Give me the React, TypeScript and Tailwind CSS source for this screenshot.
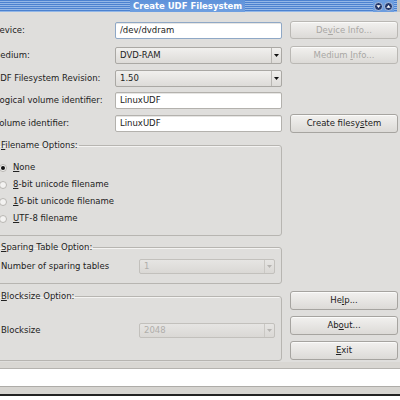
import React from 'react';

const U = ({ children }: { children: React.ReactNode }) => (
  <span className="underline underline-offset-[1px]">{children}</span>
);

const Field = ({ value, focused }: { value: string; focused?: boolean }) => (
  <div
    className={`w-[167px] h-[17px] bg-white border rounded-[2px] flex items-center pl-[4px] shadow-[inset_0_1px_0_#e6e5e3] ${
      focused ? 'border-[#8fa8c6]' : 'border-[#b3b1ad]'
    }`}
  >
    {value}
  </div>
);

const Combo = ({ value, disabled, w }: { value: string; disabled?: boolean; w: string }) => (
  <div
    className={`${w} flex items-stretch border rounded-[2px] bg-gradient-to-b ${
      disabled
        ? 'border-[#c2c0bc] from-[#e6e5e3] to-[#dad8d5] text-[#b0aeab]'
        : 'border-[#aaa8a4] from-[#f1f0ee] to-[#dddbd8] text-[#222]'
    }`}
  >
    <div className="flex-1 flex items-center pl-[4px]">{value}</div>
    <div
      className={`w-[10px] flex items-center justify-center border-l ${
        disabled ? 'border-[#cac8c4]' : 'border-[#b9b7b3]'
      }`}
    >
      <svg width="5" height="3" viewBox="0 0 5 3">
        <path d="M0 0h5L2.5 3z" fill={disabled ? '#b5b3b0' : '#111'} />
      </svg>
    </div>
  </div>
);

const Button = ({ children, disabled, h = 'h-[18px]' }: { children: React.ReactNode; disabled?: boolean; h?: string }) => (
  <div
    className={`w-[108px] ${h} flex items-center justify-center border rounded-[3px] bg-gradient-to-b from-[#f2f1ef] to-[#dcdad7] shadow-[inset_0_1px_0_#fbfbfa] ${
      disabled ? 'border-[#bab8b4] text-[#a9a7a4]' : 'border-[#a6a4a0] text-[#222]'
    }`}
  >
    <span>{children}</span>
  </div>
);

const Radio = ({ checked, children }: { checked?: boolean; children: React.ReactNode }) => (
  <div className="h-[17px] flex items-center">
    <div className="ml-[7px] w-[8px] h-[8px] rounded-full border border-[#b8b6b2] bg-[#f3f2f1] flex items-center justify-center">
      {checked && <div className="w-[4px] h-[4px] rounded-full bg-[#111]" />}
    </div>
    <span className="ml-[6px]">{children}</span>
  </div>
);

const Stripes = ({ className }: { className: string }) => (
  <div
    className={`${className} h-full bg-[repeating-linear-gradient(180deg,#4c82d0_0px,#4c82d0_1px,#93b7e7_1px,#93b7e7_2px)]`}
  />
);

const Group = ({ title, h, children }: { title: React.ReactNode; h: string; children: React.ReactNode }) => (
  <fieldset className={`w-[291px] ${h} border border-[#b7b5b1] rounded-[3px] shadow-[inset_1px_1px_0_#f4f3f2]`}>
    <legend className="ml-[8px] px-[1px] leading-[11px]">{title}</legend>
    {children}
  </fieldset>
);

export default function App() {
  return (
    <div className="w-[400px] h-[400px] overflow-hidden bg-[#dfdedc] text-[#222] text-[8.5px] leading-[11px] font-['DejaVu_Sans',sans-serif] flex flex-col">
      {/* Title bar */}
      <div className="h-[12px] flex items-stretch bg-[#5a8ed8] shrink-0">
        <Stripes className="w-[130px] shrink-0" />
        <div className="px-[3px] flex items-center text-white font-bold bg-gradient-to-b from-[#5e92da] to-[#6f9fe0] shrink-0">
          Create UDF Filesystem
        </div>
        <Stripes className="flex-1" />
        <div className="flex items-center gap-[1px] px-[1px] bg-[#6c9ddf]">
          <svg width="9" height="9" viewBox="0 0 9 9">
            <circle cx="4.5" cy="4.5" r="4" fill="#24386c" stroke="#c9d9f1" strokeWidth="0.8" />
            <path d="M2.4 3.3h4.2L4.5 6z" fill="#fff" />
          </svg>
          <svg width="9" height="9" viewBox="0 0 9 9">
            <circle cx="4.5" cy="4.5" r="4" fill="#24386c" stroke="#c9d9f1" strokeWidth="0.8" />
            <path d="M2.4 5.7h4.2L4.5 3z" fill="#fff" />
          </svg>
        </div>
        <Stripes className="w-[3px]" />
        <div className="w-[3px] bg-[#c9c7c3]" />
      </div>

      {/* Form rows */}
      <div className="flex items-center h-[18px] mt-[9px]">
        <div className="-ml-[7px] w-[122px]">Device:</div>
        <Field value="/dev/dvdram" focused />
        <div className="w-[8px]" />
        <Button disabled>
          De<U>v</U>ice Info...
        </Button>
      </div>
      <div className="flex items-center h-[18px] mt-[7px]">
        <div className="-ml-[7px] w-[122px]">Medium:</div>
        <div className="h-[17px] flex">
          <Combo value="DVD-RAM" w="w-[167px]" />
        </div>
        <div className="w-[8px]" />
        <Button disabled>
          Medium <U>I</U>nfo...
        </Button>
      </div>
      <div className="flex items-center h-[17px] mt-[6px]">
        <div className="-ml-[6px] w-[121px]">UDF Filesystem Revision:</div>
        <div className="h-[17px] flex">
          <Combo value="1.50" w="w-[167px]" />
        </div>
      </div>
      <div className="flex items-center h-[16px] mt-[5px]">
        <div className="-ml-[5px] w-[120px]">Logical volume identifier:</div>
        <Field value="LinuxUDF" />
      </div>
      <div className="flex items-center h-[19px] mt-[6px]">
        <div className="-ml-[6px] w-[121px]">Volume identifier:</div>
        <Field value="LinuxUDF" />
        <div className="w-[8px]" />
        <Button h="h-[19px]">
          Create filesy<U>s</U>tem
        </Button>
      </div>

      {/* Filename options */}
      <div className="-ml-[9px] mt-[7px]">
        <Group
          h="h-[96px]"
          title={
            <>
              <U>F</U>ilename Options:
            </>
          }
        >
          <div className="pt-[8px]">
            <Radio checked>
              <U>N</U>one
            </Radio>
            <Radio>
              <U>8</U>-bit unicode filename
            </Radio>
            <Radio>
              <U>1</U>6-bit unicode filename
            </Radio>
            <Radio>
              <U>U</U>TF-8 filename
            </Radio>
          </div>
        </Group>
      </div>

      {/* Sparing table */}
      <div className="-ml-[9px] mt-[6px]">
        <Group
          h="h-[42px]"
          title={
            <>
              <U>S</U>paring Table Option:
            </>
          }
        >
          <div className="pt-[6px] flex items-center">
            <div className="ml-[9px] flex-1 leading-[15px]">Number of sparing tables</div>
            <div className="h-[15px] flex mr-[6px]">
              <Combo value="1" disabled w="w-[136px]" />
            </div>
          </div>
        </Group>
      </div>

      {/* Blocksize + buttons */}
      <div className="flex items-start mt-[7px]">
        <div className="-ml-[9px]">
          <Group
            h="h-[70px]"
            title={
              <>
                <U>B</U>locksize Option:
              </>
            }
          >
            <div className="pt-[21px] flex items-center">
              <div className="ml-[9px] flex-1 leading-[15px]">Blocksize</div>
              <div className="h-[15px] flex mr-[6px]">
                <Combo value="2048" disabled w="w-[136px]" />
              </div>
            </div>
          </Group>
        </div>
        <div className="ml-[8px] flex flex-col gap-[6px]">
          <Button h="h-[19px]">
            He<U>l</U>p...
          </Button>
          <Button h="h-[19px]">
            Ab<U>o</U>ut...
          </Button>
          <Button h="h-[19px]">
            <U>E</U>xit
          </Button>
        </div>
      </div>

      {/* Bottom strips */}
      <div className="h-[7px] mt-[1px] bg-[#d9d7d3] border-b border-[#b5b3af] shrink-0" />
      <div className="h-[17px] bg-white shrink-0" />
      <div className="h-[8px] bg-[#d6d4d0] border-t border-[#aeaca8] shrink-0" />
      <div className="h-[2px] bg-[#222] shrink-0" />
      <div className="flex-1 bg-white" />
    </div>
  );
}
